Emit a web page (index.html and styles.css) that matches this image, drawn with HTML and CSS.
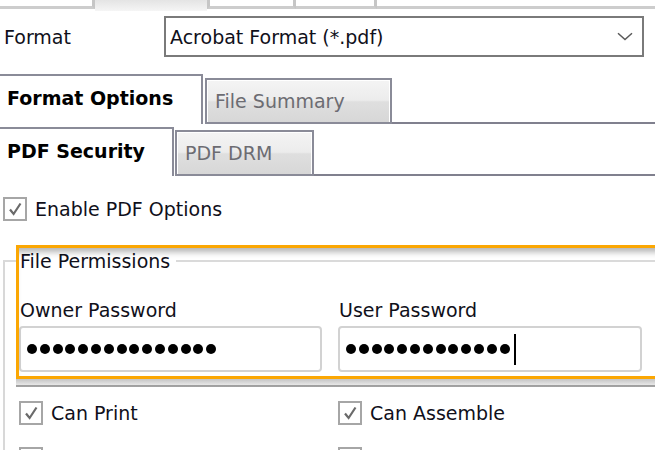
FILE: index.html
```html
<!DOCTYPE html>
<html lang="en">
<head>
<meta charset="utf-8">
<title>PDF Options</title>
<link rel="stylesheet" href="styles.css">
</head>
<body>
<div class="page">
  <div class="strip">
    <div class="st st-a"></div>
    <div class="st st-sel"></div>
    <div class="st st-c"></div>
    <div class="st st-d"></div>
    <div class="st st-rest"></div>
  </div>

  <div class="format-row">
    <div class="format-label">Format</div>
    <div class="combo">
      <span class="combo-text">Acrobat Format (*.pdf)</span>
      <svg class="chev" width="16" height="9" viewBox="0 0 16 9"><path d="M1 1.2 L8 7.6 L15 1.2" fill="none" stroke="#5a5a5a" stroke-width="1.5"/></svg>
    </div>
  </div>

  <div class="tabrow tabrow-1">
    <div class="tab tab-sel tab-fo">Format Options</div>
    <div class="tab tab-off tab-fs">File Summary</div>
    <div class="tab-fill"></div>
  </div>

  <div class="tabrow tabrow-2">
    <div class="tab tab-sel tab-ps">PDF Security</div>
    <div class="tab tab-off tab-drm">PDF DRM</div>
    <div class="tab-fill"></div>
  </div>

  <label class="check enable">
    <span class="box"><svg width="20" height="20" viewBox="0 0 20 20"><path d="M5 10.5 L8.6 15 L15.5 4.5" fill="none" stroke="#6a6a6a" stroke-width="2.2"/></svg></span>
    <span>Enable PDF Options</span>
  </label>

  <div class="group">
    <div class="legend">File Permissions</div>
    <div class="grid fields">
      <div class="field">
        <div class="flabel">Owner Password</div>
        <div class="pw"><i></i><i></i><i></i><i></i><i></i><i></i><i></i><i></i><i></i><i></i><i></i><i></i><i></i><i></i><i></i></div>
      </div>
      <div class="field">
        <div class="flabel">User Password</div>
        <div class="pw"><i></i><i></i><i></i><i></i><i></i><i></i><i></i><i></i><i></i><i></i><i></i><i></i><i></i><span class="caret"></span></div>
      </div>
    </div>
    <div class="spot"></div>
    <div class="grid checks">
      <label class="check">
        <span class="box"><svg width="20" height="20" viewBox="0 0 20 20"><path d="M5 10.5 L8.6 15 L15.5 4.5" fill="none" stroke="#6a6a6a" stroke-width="2.2"/></svg></span>
        <span>Can Print</span>
      </label>
      <label class="check">
        <span class="box"><svg width="20" height="20" viewBox="0 0 20 20"><path d="M5 10.5 L8.6 15 L15.5 4.5" fill="none" stroke="#6a6a6a" stroke-width="2.2"/></svg></span>
        <span>Can Assemble</span>
      </label>
      <div class="check"><span class="box"></span></div>
      <div class="check"><span class="box"></span></div>
    </div>
  </div>
</div>
</body>
</html>
```

FILE: styles.css
```css
html, body {
  margin: 0;
  padding: 0;
  background: #fff;
}
body {
  width: 655px;
  height: 450px;
  overflow: hidden;
  font-family: "DejaVu Sans", "Noto Sans", sans-serif;
  font-size: 19px;
  color: #10101a;
}
.page {
  width: 655px;
  height: 450px;
  overflow: hidden;
}

/* top tab strip remnants */
.strip {
  display: flex;
  align-items: flex-start;
  height: 11px;
}
.st {
  height: 6px;
  border-bottom: 3px solid #cdcdcd;
}
.st-a {
  width: 92px;
  border-right: 3px solid #c6c6c6;
}
.st-sel {
  width: 112px;
  height: 11px;
  border-bottom: none;
  background: linear-gradient(#e4e4e4, #f5f5f5);
}
.st-c {
  width: 83px;
  border-left: 3px solid #c6c6c6;
  border-right: 3px solid #c6c6c6;
}
.st-d {
  width: 78px;
  border-right: 3px solid #c6c6c6;
}
.st-rest {
  flex: 1;
}

/* format combo */
.format-row {
  display: flex;
  align-items: center;
  margin-top: 5px;
  height: 41px;
}
.format-label {
  flex: 0 0 164px;
  box-sizing: border-box;
  padding-left: 4px;
}
.combo {
  flex: 0 0 480px;
  box-sizing: border-box;
  width: 480px;
  height: 41px;
  border: 2px solid #7a7a7a;
  display: flex;
  align-items: center;
  justify-content: space-between;
  padding: 0 9px 0 4px;
}
.chev {
  display: block;
}

/* tab rows */
.tabrow {
  display: flex;
  align-items: flex-end;
}
.tabrow-1 {
  margin-top: 17px;
  height: 50px;
}
.tabrow-2 {
  margin-top: 3px;
  height: 49px;
}
.tab {
  display: flex;
  align-items: center;
  box-sizing: content-box;
  white-space: nowrap;
}
.tab-sel {
  border-top: 2px solid #8a8b98;
  border-right: 2px solid #8a8b98;
  background: #fff;
  font-weight: bold;
  color: #000;
  padding-left: 7px;
  padding-bottom: 4px;
}
.tab-fo {
  width: 194px;
  height: 44px;
}
.tab-ps {
  width: 165px;
  height: 43px;
}
.tab-off {
  border: 2px solid #8a8b98;
  background: linear-gradient(#f4f4f4 0%, #ececec 48%, #dfdfdf 52%, #d7d7d7 100%);
  box-shadow: inset 1px 1px 0 #fff, inset -1px 0 0 #fff;
  color: #6c6c72;
  padding-left: 8px;
  height: 42px;
}
.tab-fs {
  margin-left: 2px;
  width: 175px;
}
.tab-drm {
  margin-left: 1px;
  width: 127px;
}
.tab-fill {
  flex: 1;
  border-bottom: 2px solid #80808e;
}

/* checkboxes */
.check {
  display: flex;
  align-items: center;
  gap: 8px;
  line-height: 24px;
  white-space: nowrap;
}
.box {
  box-sizing: border-box;
  width: 24px;
  height: 24px;
  border: 2px solid #a6a6a6;
  background: #fff;
  display: flex;
  flex: 0 0 24px;
}
.box svg {
  display: block;
}
.enable {
  margin-top: 21px;
  margin-left: 3px;
}

/* group */
.group {
  position: relative;
  margin-top: 39px;
  margin-left: 3px;
  border-top: 2px solid #dadada;
  border-left: 2px solid #d8d8d8;
  padding-left: 14px;
  height: 300px;
}
.legend {
  width: fit-content;
  background: #fff;
  margin-top: -13px;
  padding: 0 6px 0 1px;
  line-height: 24px;
}
.grid {
  display: grid;
  grid-template-columns: 303px 304px;
  column-gap: 16px;
}
.fields {
  margin-top: 25px;
}
.flabel {
  line-height: 24px;
  padding-left: 1px;
  margin-bottom: 4px;
}
.pw {
  box-sizing: border-box;
  height: 46px;
  border: 2px solid #d2d2d2;
  border-radius: 4px;
  display: flex;
  align-items: center;
  gap: 2.8px;
  padding-left: 6px;
}
.pw i {
  display: block;
  width: 10px;
  height: 10px;
  border-radius: 50%;
  background: #000;
}
.caret {
  display: block;
  width: 2px;
  height: 31px;
  margin-left: 2px;
  background: #000;
}
.checks {
  margin-top: 29px;
  row-gap: 22px;
}

/* orange spotlight highlight over the permissions block */
.spot {
  position: absolute;
  left: 11px;
  top: -17px;
  width: 660px;
  height: 134px;
  box-sizing: border-box;
  border: 3px solid #fba703;
  box-shadow: inset 0 8px 6px -4px rgba(0, 0, 0, 0.3);
  pointer-events: none;
}
.spot::after {
  content: "";
  position: absolute;
  left: -3px;
  right: -3px;
  bottom: -11px;
  height: 8px;
  background: linear-gradient(#c4c4c4, #e6e6e6 72%, #9e9e9e 72%, #a4a4a4);
}
```
